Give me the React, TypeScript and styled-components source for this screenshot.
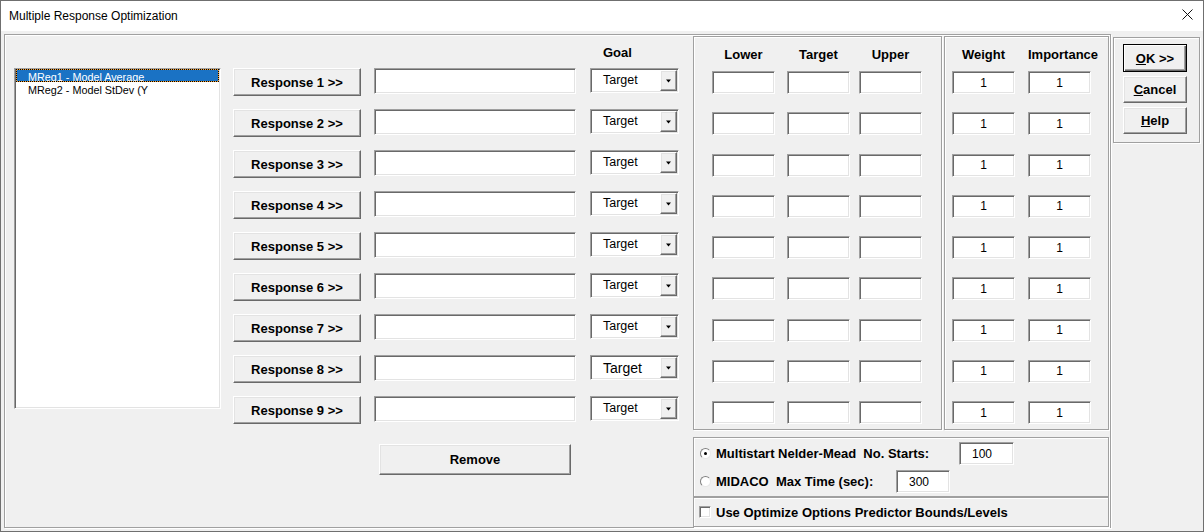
import React from "react";
import styled, { createGlobalStyle, css } from "styled-components";

const GlobalStyle = createGlobalStyle`
  html, body { margin: 0; padding: 0; background: #f0f0f0; }
  body { font-family: "Liberation Sans", Arial, sans-serif; color: #000; }
  *, *::before, *::after { box-sizing: border-box; }
`;

const sunken = css`
  background: #fff;
  border: 1px solid;
  border-color: #a0a0a0 #fff #fff #a0a0a0;
  box-shadow: inset 1px 1px 0 #696969, inset -1px -1px 0 #e3e3e3;
`;

const raised = css`
  background: #f0f0f0;
  border: 1px solid;
  border-color: #fff #696969 #696969 #fff;
  box-shadow: inset -1px -1px 0 #a0a0a0, inset 1px 1px 0 #e3e3e3;
`;

const etched = css`
  border: 1px solid #a0a0a0;
  box-shadow: inset 1px 1px 0 #fff, 1px 1px 0 #fff;
`;

const Window = styled.div`
  width: 1204px;
  height: 532px;
  border: 1px solid #6f6f6f;
  background: #f0f0f0;
  display: flex;
  flex-direction: column;
  overflow: hidden;
`;

const TitleBar = styled.div`
  flex: none;
  height: 30px;
  background: #fff;
  display: flex;
  align-items: center;
  justify-content: space-between;
  padding: 0 10px 0 8px;
`;

const Title = styled.span`
  font-size: 12px;
`;

const CloseIcon = styled.svg`
  display: block;
  margin-top: -3px;
`;

const Body = styled.div`
  flex: 1;
  display: flex;
  align-items: flex-start;
  gap: 2px;
  padding: 3px 0 0 3px;
`;

const MainFrame = styled.div`
  ${etched};
  width: 1107px;
  height: 494px;
  display: flex;
  padding-left: 9px;
`;

const LeftArea = styled.div`
  width: 665px;
  display: flex;
  flex-direction: column;
  padding-top: 10px;
`;

const cols = "219px 141px 216px 89px";

const GoalHeader = styled.div`
  display: grid;
  grid-template-columns: ${cols};
  height: 15px;
  line-height: 15px;
`;

const GoalLabel = styled.span`
  grid-column: 4;
  font-size: 13px;
  font-weight: bold;
  padding-left: 13px;
`;

const RowsGrid = styled.div`
  margin-top: 8px;
  display: grid;
  grid-template-columns: ${cols};
  grid-template-rows: repeat(9, 28px) 38px;
  row-gap: 13px;
  align-items: start;
`;

const ListBox = styled.div`
  ${sunken};
  grid-column: 1;
  grid-row: 1 / span 9;
  width: 207px;
  height: 341px;
  padding: 0 1px;
`;

const ListItem = styled.div<{ $selected?: boolean }>`
  height: 13px;
  line-height: 13px;
  padding-top: 2px;
  font-size: 10.8px;
  padding-left: 12px;
  white-space: nowrap;
  ${(p) =>
    p.$selected &&
    css`
      background: #1a72c4;
      color: #fff;
      box-shadow: inset 0 0 0 1px #f5a030;
      outline: 1px dotted #000;
      outline-offset: -1px;
    `}
`;

const ResponseButton = styled.button`
  ${raised};
  grid-column: 2;
  width: 128px;
  height: 28px;
  padding: 0;
  font-family: inherit;
  font-size: 13px;
  font-weight: bold;
  color: #000;
`;

const NameField = styled.input`
  ${sunken};
  grid-column: 3;
  width: 202px;
  height: 26px;
  padding: 0 4px;
  outline: none;
  font-family: inherit;
  font-size: 12px;
`;

const Select = styled.div`
  ${sunken};
  grid-column: 4;
  width: 89px;
  height: 25px;
  padding: 1px 1px 1px 2px;
  display: flex;
  align-items: center;
`;

const SelectText = styled.span<{ $big?: boolean }>`
  flex: 1;
  padding-left: 10px;
  font-size: ${(p) => (p.$big ? "14px" : "12.5px")};
  line-height: 1;
`;

const SelectButton = styled.span`
  ${raised};
  width: 17px;
  align-self: stretch;
  display: flex;
  align-items: center;
  justify-content: center;
`;

const RemoveButton = styled.button`
  ${raised};
  grid-column: 3;
  grid-row: 10;
  margin: 7px 0 0 5px;
  width: 192px;
  height: 31px;
  padding: 0;
  font-family: inherit;
  font-size: 13px;
  font-weight: bold;
  color: #000;
`;

const RightColumn = styled.div`
  margin-left: 14px;
  width: 416px;
  display: flex;
  flex-direction: column;
  padding-top: 1px;
`;

const PanelsRow = styled.div`
  display: flex;
  gap: 2px;
  height: 394px;
`;

const Panel = styled.div<{ $w: number; $pl: number }>`
  ${etched};
  width: ${(p) => p.$w}px;
  padding: 10px 0 0 ${(p) => p.$pl}px;
`;

const PanelHeader = styled.div<{ $cols: string }>`
  display: grid;
  grid-template-columns: ${(p) => p.$cols};
  height: 15px;
  line-height: 15px;
`;

const HeaderCell = styled.span`
  width: 63px;
  text-align: center;
  font-size: 13px;
  font-weight: bold;
  white-space: nowrap;
`;

const InputsGrid = styled.div<{ $cols: string }>`
  margin-top: 9px;
  display: grid;
  grid-template-columns: ${(p) => p.$cols};
  grid-template-rows: repeat(9, 23px);
  row-gap: 18.25px;
`;

const ValueField = styled.input`
  ${sunken};
  width: 63px;
  height: 23px;
  padding: 0 2px;
  outline: none;
  text-align: center;
  font-family: inherit;
  font-size: 12px;
  color: #000;
`;

const OptionsFrame = styled.div`
  ${etched};
  margin-top: 7px;
  height: 60px;
  padding: 4px 0 0 6px;
  display: flex;
  flex-direction: column;
  gap: 5px;
`;

const OptionRow = styled.div`
  display: flex;
  align-items: center;
  height: 23px;
`;

const Radio = styled.span<{ $checked?: boolean }>`
  width: 11px;
  height: 11px;
  margin-right: 5px;
  border-radius: 50%;
  background: #fff;
  border: 1px solid;
  border-color: #808080 #e8e8e8 #e8e8e8 #808080;
  display: flex;
  align-items: center;
  justify-content: center;
  &::after {
    content: "";
    width: 3px;
    height: 3px;
    border-radius: 50%;
    background: ${(p) => (p.$checked ? "#000" : "transparent")};
  }
`;

const BoldLabel = styled.span<{ $w?: number }>`
  font-size: 13px;
  font-weight: bold;
  white-space: nowrap;
  ${(p) => p.$w && `width: ${p.$w}px;`}
`;

const SmallField = styled.input<{ $w: number }>`
  ${sunken};
  width: ${(p) => p.$w}px;
  height: 23px;
  padding: 0 0 0 12px;
  outline: none;
  font-family: inherit;
  font-size: 12px;
  color: #000;
`;

const CheckFrame = styled.div`
  ${etched};
  height: 30px;
  display: flex;
  align-items: center;
  padding-left: 5px;
`;

const CheckBox = styled.span`
  ${sunken};
  width: 12px;
  height: 12px;
  margin-right: 5px;
`;

const ButtonFrame = styled.div`
  ${etched};
  width: 87px;
  height: 106px;
  margin-top: 3px;
  padding: 6px 0 0 9px;
  display: flex;
  flex-direction: column;
  gap: 4px;
`;

const DialogButton = styled.button<{ $default?: boolean }>`
  ${raised};
  width: 64px;
  height: 27px;
  padding: 0;
  font-family: inherit;
  font-size: 13px;
  font-weight: bold;
  color: #000;
  ${(p) =>
    p.$default &&
    css`
      height: 28px;
      border: 1px solid #000;
      box-shadow: inset 1px 1px 0 #fff, inset -1px -1px 0 #696969,
        inset -2px -2px 0 #a0a0a0;
    `}
`;

const Arrow = () => (
  <svg width="7" height="4" viewBox="0 0 7 4">
    <path d="M1 0.5h5L3.5 3.5z" fill="#000" />
  </svg>
);

const rows = [1, 2, 3, 4, 5, 6, 7, 8, 9];

export default function App() {
  return (
    <>
      <GlobalStyle />
      <Window>
        <TitleBar>
          <Title>Multiple Response Optimization</Title>
          <CloseIcon width="11" height="11" viewBox="0 0 11 11">
            <path d="M0.5 0.5L10.5 10.5M10.5 0.5L0.5 10.5" stroke="#111" strokeWidth="1" />
          </CloseIcon>
        </TitleBar>
        <Body>
          <MainFrame>
            <LeftArea>
              <GoalHeader>
                <GoalLabel>Goal</GoalLabel>
              </GoalHeader>
              <RowsGrid>
                <ListBox>
                  <ListItem $selected>MReg1 - Model Average</ListItem>
                  <ListItem>MReg2 - Model StDev (Y</ListItem>
                </ListBox>
                {rows.map((n) => (
                  <React.Fragment key={n}>
                    <ResponseButton style={{ gridRow: n }}>Response {n} &gt;&gt;</ResponseButton>
                    <NameField style={{ gridRow: n }} readOnly defaultValue="" />
                    <Select style={{ gridRow: n }}>
                      <SelectText $big={n === 8}>Target</SelectText>
                      <SelectButton>
                        <Arrow />
                      </SelectButton>
                    </Select>
                  </React.Fragment>
                ))}
                <RemoveButton>Remove</RemoveButton>
              </RowsGrid>
            </LeftArea>
            <RightColumn>
              <PanelsRow>
                <Panel $w={249} $pl={18}>
                  <PanelHeader $cols="75px 72px 63px">
                    <HeaderCell>Lower</HeaderCell>
                    <HeaderCell>Target</HeaderCell>
                    <HeaderCell>Upper</HeaderCell>
                  </PanelHeader>
                  <InputsGrid $cols="75px 72px 63px">
                    {rows.map((n) => (
                      <React.Fragment key={n}>
                        <ValueField readOnly defaultValue="" />
                        <ValueField readOnly defaultValue="" />
                        <ValueField readOnly defaultValue="" />
                      </React.Fragment>
                    ))}
                  </InputsGrid>
                </Panel>
                <Panel $w={165} $pl={7}>
                  <PanelHeader $cols="76px 63px">
                    <HeaderCell>Weight</HeaderCell>
                    <HeaderCell>Importance</HeaderCell>
                  </PanelHeader>
                  <InputsGrid $cols="76px 63px">
                    {rows.map((n) => (
                      <React.Fragment key={n}>
                        <ValueField readOnly defaultValue="1" />
                        <ValueField readOnly defaultValue="1" />
                      </React.Fragment>
                    ))}
                  </InputsGrid>
                </Panel>
              </PanelsRow>
              <OptionsFrame>
                <OptionRow>
                  <Radio $checked />
                  <BoldLabel $w={243}>Multistart Nelder-Mead&nbsp; No. Starts:</BoldLabel>
                  <SmallField $w={55} readOnly defaultValue="100" />
                </OptionRow>
                <OptionRow>
                  <Radio />
                  <BoldLabel $w={180}>MIDACO&nbsp; Max Time (sec):</BoldLabel>
                  <SmallField $w={54} readOnly defaultValue="300" />
                </OptionRow>
              </OptionsFrame>
              <CheckFrame>
                <CheckBox />
                <BoldLabel>Use Optimize Options Predictor Bounds/Levels</BoldLabel>
              </CheckFrame>
            </RightColumn>
          </MainFrame>
          <ButtonFrame>
            <DialogButton $default>
              <u>O</u>K &gt;&gt;
            </DialogButton>
            <DialogButton>
              <u>C</u>ancel
            </DialogButton>
            <DialogButton>
              <u>H</u>elp
            </DialogButton>
          </ButtonFrame>
        </Body>
      </Window>
    </>
  );
}
